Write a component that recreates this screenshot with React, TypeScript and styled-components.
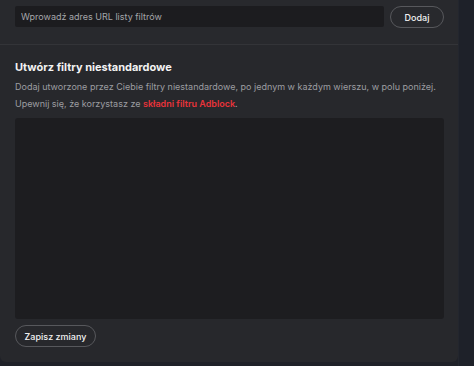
import React from "react";
import styled, { createGlobalStyle } from "styled-components";

const GlobalStyle = createGlobalStyle`
  html, body {
    margin: 0;
    padding: 0;
    background: #1f2128;
    font-family: Inter, "Noto Sans", sans-serif;
  }
`;

type PillButtonProps = {
  $width: number;
};

const App = () => {
  return (
    <>
      <GlobalStyle />
      <Page>
        <Panel>
          <TopSection>
            <UrlInput placeholder="Wprowadź adres URL listy filtrów" />
            <PillButton $width={54}>Dodaj</PillButton>
          </TopSection>
          <CustomSection>
            <Title>Utwórz filtry niestandardowe</Title>
            <Description>
              Dodaj utworzone przez Ciebie filtry niestandardowe, po jednym w
              każdym wierszu, w polu poniżej.
              <br />
              Upewnij się, że korzystasz ze{" "}
              <RedLink href="#">składni filtru Adblock</RedLink>.
            </Description>
            <FilterArea spellCheck={false} />
            <Actions>
              <PillButton $width={81}>Zapisz zmiany</PillButton>
            </Actions>
          </CustomSection>
        </Panel>
        <SideStrip />
      </Page>
    </>
  );
};

const Page = styled.div`
  display: flex;
  width: 474px;
  height: 366px;
  overflow: hidden;
  background: #1f2128;
`;

const Panel = styled.div`
  width: 458px;
  height: 362px;
  display: flex;
  flex-direction: column;
  background: #27282c;
  border-radius: 0 0 6px 6px;
`;

const SideStrip = styled.div`
  flex: 1;
  background: #1e2129;
  border-left: 1px solid #23262e;
`;

const TopSection = styled.div`
  display: flex;
  align-items: flex-start;
  gap: 6px;
  padding: 6px 14px 0 15px;
  height: 45px;
  box-sizing: border-box;
  border-bottom: 1px solid #333438;
  background: #28292d;
`;

const UrlInput = styled.input`
  width: 369px;
  height: 21px;
  box-sizing: border-box;
  border: none;
  outline: none;
  border-radius: 2px;
  background: #1c1c1f;
  color: #e0e0e0;
  padding: 0 6px;
  font-family: Inter, "Noto Sans", sans-serif;
  font-size: 9px;
  &::placeholder {
    color: #a5a6aa;
  }
`;

const PillButton = styled.button<PillButtonProps>`
  width: ${(props) => props.$width}px;
  height: 22px;
  padding: 0;
  border: 1px solid #57585c;
  border-radius: 999px;
  background: transparent;
  color: #f2f2f2;
  font-family: Inter, "Noto Sans", sans-serif;
  font-size: 9px;
  font-weight: 500;
  white-space: nowrap;
  cursor: pointer;
`;

const CustomSection = styled.div`
  flex: 1;
  display: flex;
  flex-direction: column;
  padding: 15px 14px 0 15px;
`;

const Title = styled.h2`
  margin: 0;
  color: #f3f3f3;
  font-size: 11px;
  font-weight: 700;
  line-height: 14px;
`;

const Description = styled.p`
  margin: 4px 0 0;
  color: #9c9da1;
  font-size: 9px;
  line-height: 17px;
  white-space: nowrap;
`;

const RedLink = styled.a`
  color: #e8333a;
  font-weight: 600;
  text-decoration: none;
`;

const FilterArea = styled.textarea`
  margin-top: 6px;
  height: 201px;
  width: 100%;
  box-sizing: border-box;
  resize: none;
  border: none;
  outline: none;
  border-radius: 3px;
  background: #1d1d20;
  color: #e0e0e0;
  padding: 6px;
`;

const Actions = styled.div`
  display: flex;
  margin-top: 6px;
`;

export default App;
